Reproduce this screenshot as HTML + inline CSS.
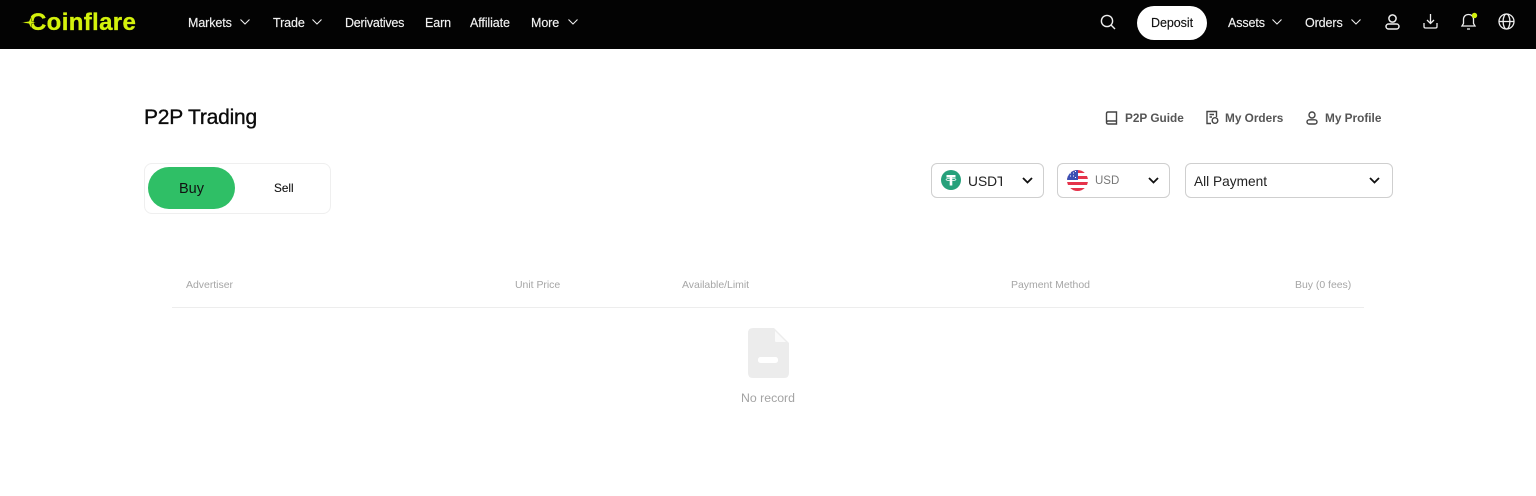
<!DOCTYPE html>
<html>
<head>
<meta charset="utf-8">
<style>
html,body{margin:0;padding:0;background:#fff}
body{width:1536px;height:496px;overflow:hidden;position:relative;font-family:"Liberation Sans",sans-serif}
.t{position:absolute;white-space:nowrap;line-height:16px}
.nav{color:#f2f2f2;font-size:12.5px;top:15px;letter-spacing:-.1px;-webkit-text-stroke:.15px #f2f2f2}
.th{color:#a6a6a6;font-size:10.5px;top:276.5px;letter-spacing:-.03px}
.lnk{color:#555;font-size:11.8px;font-weight:bold;top:110px}
.box{position:absolute;top:163px;height:33px;border:1px solid #cfcfcf;border-radius:6px;background:#fff}
svg{position:absolute;overflow:visible}
</style>
</head>
<body>
<div style="position:absolute;left:0;top:0;width:1536px;height:49px;background:#030303"></div>

<div class="t" style="left:29px;top:11px;font-size:24px;line-height:24px;font-weight:bold;color:#d4f20c;letter-spacing:.35px;-webkit-text-stroke:.3px #d4f20c">Coinflare</div>
<svg style="left:21px;top:12px" width="18" height="20" viewBox="0 0 18 20"><path d="M0 10.500L8 9.300L9.800 5L10.600 9.300L15 10.500L10.600 11.600L9.800 16L8 11.700Z" fill="#d4f20c" stroke="#030303" stroke-width=".4"/></svg>

<div class="t nav" style="left:188px">Markets</div>
<svg style="left:240px;top:19px" width="10" height="6" viewBox="0 0 10 6"><path d="M.5.5L5 5L9.500.5" fill="none" stroke="#eee" stroke-width="1.1"/></svg>
<div class="t nav" style="left:273px">Trade</div>
<svg style="left:312px;top:19px" width="10" height="6" viewBox="0 0 10 6"><path d="M.5.5L5 5L9.500.5" fill="none" stroke="#eee" stroke-width="1.1"/></svg>
<div class="t nav" style="left:345px;letter-spacing:-.25px">Derivatives</div>
<div class="t nav" style="left:425px">Earn</div>
<div class="t nav" style="left:470px">Affiliate</div>
<div class="t nav" style="left:531px">More</div>
<svg style="left:568px;top:19px" width="10" height="6" viewBox="0 0 10 6"><path d="M.5.5L5 5L9.500.5" fill="none" stroke="#eee" stroke-width="1.1"/></svg>

<svg style="left:1100px;top:14px" width="16" height="16" viewBox="0 0 16 16"><circle cx="7" cy="7" r="5.600" fill="none" stroke="#eee" stroke-width="1.400"/><path d="M11 11L15 15" stroke="#eee" stroke-width="1.400"/></svg>
<div style="position:absolute;left:1137px;top:6px;width:70px;height:34px;background:#fff;border-radius:17px"></div>
<div class="t" style="left:1151px;top:15px;font-size:12.5px;color:#111;letter-spacing:-.05px;-webkit-text-stroke:.15px #111">Deposit</div>
<div class="t nav" style="left:1228px">Assets</div>
<svg style="left:1272px;top:19px" width="10" height="6" viewBox="0 0 10 6"><path d="M.5.5L5 5L9.500.5" fill="none" stroke="#eee" stroke-width="1.1"/></svg>
<div class="t nav" style="left:1305px">Orders</div>
<svg style="left:1351px;top:19px" width="10" height="6" viewBox="0 0 10 6"><path d="M.5.5L5 5L9.500.5" fill="none" stroke="#eee" stroke-width="1.1"/></svg>
<svg style="left:1385px;top:14px" width="15" height="16" viewBox="0 0 15 16"><circle cx="7.500" cy="4.500" r="3.600" fill="none" stroke="#eee" stroke-width="1.500"/><rect x="1" y="10" width="13" height="5" rx="2.500" fill="none" stroke="#eee" stroke-width="1.500"/></svg>
<svg style="left:1423px;top:14px" width="15" height="15" viewBox="0 0 15 15"><path d="M7.500 0V9M4 6L7.500 9.500L11 6M1 9V12.500Q1 14 2.500 14H12.500Q14 14 14 12.500V9" fill="none" stroke="#eee" stroke-width="1.300"/></svg>
<svg style="left:1461px;top:12px" width="17" height="19" viewBox="0 0 17 19"><path d="M1 14H14L12.500 11.500V7.500C12.500 4.500 10.500 2.500 7.500 2.500S2.500 4.500 2.500 7.500V11.500ZM6 17H9" fill="none" stroke="#eee" stroke-width="1.300"/><circle cx="13.500" cy="3.500" r="2.700" fill="#d4f20c"/></svg>
<svg style="left:1498px;top:13px" width="17" height="17" viewBox="0 0 17 17"><g fill="none" stroke="#eee" stroke-width="1.300"><circle cx="8.500" cy="8.500" r="7.500"/><ellipse cx="8.500" cy="8.500" rx="3.400" ry="7.500"/><path d="M1 8.500H16"/></g></svg>

<div class="t" style="left:144px;top:105px;font-size:21px;line-height:26px;color:#0b0b0b;letter-spacing:-.2px;-webkit-text-stroke:.35px #0b0b0b">P2P Trading</div>

<svg style="left:1105px;top:111px" width="13" height="14" viewBox="0 0 13 14"><path d="M1.500 11.500V2.500Q1.500 1 3 1H11.500V13H3Q1.500 13 1.500 11.500Q1.500 10 3 10H11.500" fill="none" stroke="#444" stroke-width="1.400"/></svg>
<div class="t lnk" style="left:1125px">P2P Guide</div>
<svg style="left:1206px;top:110px" width="13" height="15" viewBox="0 0 13 15"><path d="M5 13.500H1V1.500H10.500V7M3.500 4.500H8M3.500 7H6" fill="none" stroke="#444" stroke-width="1.400"/><circle cx="9" cy="10.500" r="2.800" fill="none" stroke="#444" stroke-width="1.400"/></svg>
<div class="t lnk" style="left:1225px">My Orders</div>
<svg style="left:1306px;top:111px" width="12" height="14" viewBox="0 0 12 14"><circle cx="6" cy="4" r="3" fill="none" stroke="#444" stroke-width="1.400"/><rect x="1" y="8.800" width="10" height="4.200" rx="2.100" fill="none" stroke="#444" stroke-width="1.400"/></svg>
<div class="t lnk" style="left:1325px">My Profile</div>

<div style="position:absolute;left:144px;top:163px;width:185px;height:49px;border:1px solid #efefef;border-radius:8px"></div>
<div style="position:absolute;left:148px;top:167px;width:87px;height:42px;border-radius:21px;background:#2fbf66"></div>
<div class="t" style="left:179px;top:181px;font-size:14.5px;color:#111">Buy</div>
<div class="t" style="left:274px;top:180px;font-size:11.8px;color:#111;-webkit-text-stroke:.1px #111">Sell</div>

<div class="box" style="left:931px;width:111px"></div>
<svg style="left:941px;top:170px" width="20" height="20" viewBox="0 0 20 20"><circle cx="10" cy="10" r="10" fill="#26a17b"/><path d="M5.500 5H14.500V7.500H11.300V15.500H8.700V7.500H5.500Z" fill="#fff"/><ellipse cx="10" cy="9.500" rx="5" ry="1.200" fill="none" stroke="#fff" stroke-width=".7"/></svg>
<div class="t" style="left:968px;top:173.500px;font-size:13.8px;color:#222;width:34px;overflow:hidden">USDT</div>
<svg style="left:1022px;top:177px" width="11" height="7" viewBox="0 0 11 7"><path d="M1 1L5.500 5.500L10 1" fill="none" stroke="#111" stroke-width="1.800"/></svg>

<div class="box" style="left:1057px;width:111px"></div>
<svg style="left:1067px;top:170px" width="21" height="21" viewBox="0 0 21 21"><defs><clipPath id="c"><circle cx="10.500" cy="10.500" r="10.500"/></clipPath></defs><g clip-path="url(#c)"><rect width="21" height="21" fill="#fff"/><path d="M0 1.500H21M0 7.500H21M0 13.500H21M0 19.500H21" stroke="#e5334b" stroke-width="3"/><rect width="11" height="10" fill="#3c50b4"/><path d="M3 3H4M6 3H7M3 6H4M6 6H7M8 1.500H9M8 7.500H9" stroke="#fff" stroke-width="1"/></g></svg>
<div class="t" style="left:1095px;top:173px;font-size:11.500px;color:#777">USD</div>
<svg style="left:1148px;top:177px" width="11" height="7" viewBox="0 0 11 7"><path d="M1 1L5.500 5.500L10 1" fill="none" stroke="#111" stroke-width="1.800"/></svg>

<div class="box" style="left:1185px;width:206px"></div>
<div class="t" style="left:1194px;top:174px;font-size:13.7px;color:#222">All Payment</div>
<svg style="left:1369px;top:177px" width="11" height="7" viewBox="0 0 11 7"><path d="M1 1L5.500 5.500L10 1" fill="none" stroke="#111" stroke-width="1.800"/></svg>

<div class="t th" style="left:186px">Advertiser</div>
<div class="t th" style="left:515px">Unit Price</div>
<div class="t th" style="left:682px">Available/Limit</div>
<div class="t th" style="left:1011px">Payment Method</div>
<div class="t th" style="left:1295px">Buy (0 fees)</div>
<div style="position:absolute;left:172px;top:307px;width:1192px;height:1px;background:#ededed"></div>

<svg style="left:748px;top:328px" width="41" height="50" viewBox="0 0 41 50"><path d="M5 0H26L41 15V45Q41 50 36 50H5Q0 50 0 45V5Q0 0 5 0Z" fill="#ececec"/><path d="M27 3L38 14H28Q27 14 27 13Z" fill="#fafafa"/><rect x="10" y="29" width="20" height="6" rx="2.500" fill="#fff"/></svg>
<div class="t" style="left:741px;top:390px;font-size:12.300px;color:#a3a3a3">No record</div>
</body>
</html>
